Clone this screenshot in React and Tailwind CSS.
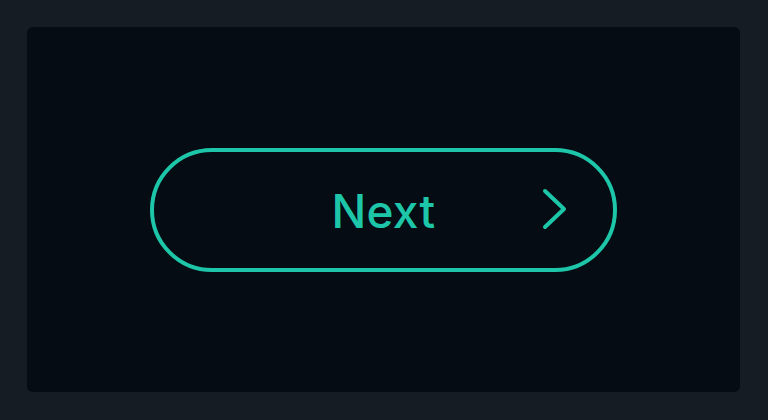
export default function App() {
  return (
    <div className="h-[420px] w-full bg-[#161c23] pt-[27px] pl-[27px] pr-[28px] pb-[28px]">
      <div className="flex h-full items-center justify-center rounded-[6px] bg-[#060c13]">
        <button className="relative flex h-[124px] w-[467px] items-center justify-center rounded-full border-[4px] border-[#1dc6a8] text-[#1dc6a8]">
          <span className="text-[46px] leading-none font-medium tracking-[0.3px] font-['Inter',sans-serif] mt-[2px]">
            Next
          </span>
          <svg
            className="absolute right-[44px] top-1/2 -translate-y-1/2"
            width="30"
            height="48"
            viewBox="0 0 30 48"
            fill="none"
            stroke="currentColor"
            strokeWidth="4"
            strokeLinecap="round"
            strokeLinejoin="round"
          >
            <path d="M6 5 L25 23 L6 41" />
          </svg>
        </button>
      </div>
    </div>
  );
}
